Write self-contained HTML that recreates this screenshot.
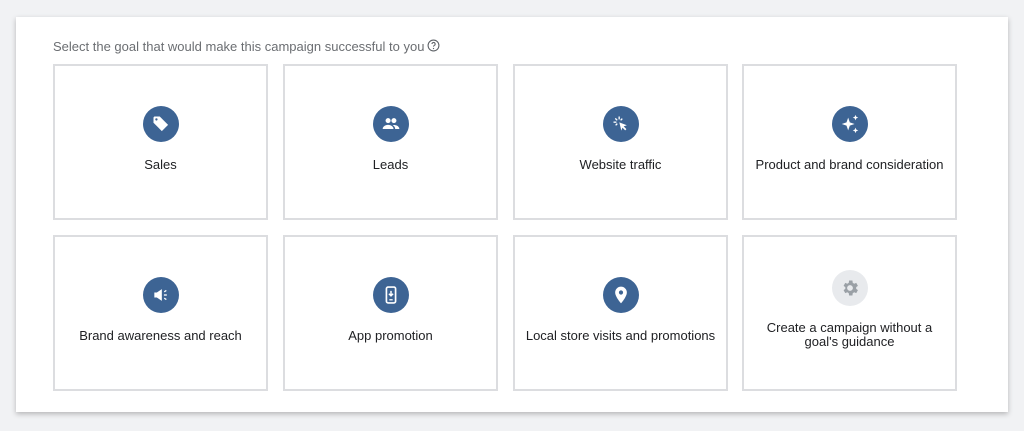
<!DOCTYPE html>
<html><head><meta charset="utf-8"><style>
*{margin:0;padding:0;box-sizing:border-box}
body{width:1024px;height:431px;background:#f1f2f4;font-family:"Liberation Sans",Arial,sans-serif;position:relative;overflow:hidden}
.card{position:absolute;left:16px;top:17px;width:992px;height:395px;background:#fff;box-shadow:0 2px 5px rgba(0,0,0,.25)}
.title{position:absolute;left:53px;top:39px;font-size:13px;color:#6b6e72;white-space:nowrap}
.title svg{vertical-align:-1px;margin-left:3px}
.tile{position:absolute;width:215px;height:156px;border:2px solid #dcdde0;background:#fff;text-align:center;color:#202124;font-size:13px}
.ic{position:absolute;left:50%;margin-left:-18px;width:36px;height:36px;border-radius:50%;background:#3d6494;display:flex;align-items:center;justify-content:center}
.lbl{position:absolute;left:0;right:0;line-height:14px}
</style></head><body>
<div class="card"></div>
<div class="title">Select the goal that would make this campaign successful to you<svg width="13" height="13" viewBox="0 0 24 24"><circle cx="12" cy="12" r="10" fill="none" stroke="#5f6368" stroke-width="2"/><path d="M9.2 9.3a2.9 2.9 0 1 1 4.2 2.6c-.9.5-1.4 1-1.4 2.1" fill="none" stroke="#5f6368" stroke-width="2"/><circle cx="12" cy="17.5" r="1.2" fill="#5f6368"/></svg></div>

<div class="tile" style="left:53px;top:64px"><div class="ic" style="top:40px"><svg width="20" height="20" viewBox="0 0 24 24"><path d="M3 4v6.5l10 10 7.5-7.5-10-10H4z" fill="#fff"/><circle cx="6.5" cy="6.5" r="1.4" fill="#3d6494"/></svg></div><div class="lbl" style="top:92px">Sales</div></div>
<div class="tile" style="left:283px;top:64px"><div class="ic" style="top:40px"><svg width="20" height="20" viewBox="0 0 24 24" fill="#fff"><circle cx="8.5" cy="8" r="3"/><circle cx="15.5" cy="8" r="3"/><path d="M2 18c0-3 3-5 6.5-5S15 15 15 18z"/><path d="M14 13.3c3.5-.6 8 1 8 4.7h-5c0-2-1-3.5-3-4.7z"/></svg></div><div class="lbl" style="top:92px">Leads</div></div>
<div class="tile" style="left:513px;top:64px"><div class="ic" style="top:40px"><svg width="20" height="20" viewBox="0 0 24 24" fill="#fff"><path d="M10 10l9 3.5-3.8 1.3 3.3 3.3-1.5 1.5-3.3-3.3L12.4 20z"/><rect x="9" y="3" width="1.6" height="3.5"/><rect x="3" y="9" width="3.5" height="1.6"/><path d="M4.6 5.8l1.1-1.1 2.3 2.3-1.1 1.1z"/><path d="M13 5l1.1 1.1-2 2-1.1-1.1z"/><path d="M5 13l1.1 1.1 2-2-1.1-1.1z"/></svg></div><div class="lbl" style="top:92px">Website traffic</div></div>
<div class="tile" style="left:742px;top:64px"><div class="ic" style="top:40px"><svg width="22" height="22" viewBox="0 0 24 24" fill="#fff"><path d="M10 5l1.8 5.2L17 12l-5.2 1.8L10 19l-1.8-5.2L3 12l5.2-1.8z"/><path d="M18 2l.9 2.1L21 5l-2.1.9L18 8l-.9-2.1L15 5l2.1-.9z"/><path d="M18 16l.9 2.1L21 19l-2.1.9L18 22l-.9-2.1L15 19l2.1-.9z"/></svg></div><div class="lbl" style="top:92px">Product and brand consideration</div></div>

<div class="tile" style="left:53px;top:235px"><div class="ic" style="top:40px"><svg width="20" height="20" viewBox="0 0 24 24" fill="#fff"><path d="M4 9h3l6-4v14l-6-4H4z"/><rect x="15.5" y="11.2" width="3.5" height="1.6"/><path d="M15.5 7.5l2.5-1.6.8 1.3-2.5 1.6z"/><path d="M15.5 16.5l2.5 1.6.8-1.3-2.5-1.6z"/></svg></div><div class="lbl" style="top:92px">Brand awareness and reach</div></div>
<div class="tile" style="left:283px;top:235px"><div class="ic" style="top:40px"><svg width="20" height="20" viewBox="0 0 24 24"><rect x="6.5" y="2.5" width="11" height="19" rx="2" fill="none" stroke="#fff" stroke-width="2"/><path d="M12 7v6M9.5 10.5L12 13l2.5-2.5" fill="none" stroke="#fff" stroke-width="1.8"/><rect x="10" y="17" width="4" height="1.5" fill="#fff"/></svg></div><div class="lbl" style="top:92px">App promotion</div></div>
<div class="tile" style="left:513px;top:235px"><div class="ic" style="top:40px"><svg width="20" height="20" viewBox="0 0 24 24"><path d="M12 2a7 7 0 0 0-7 7c0 5.2 7 13 7 13s7-7.8 7-13a7 7 0 0 0-7-7z" fill="#fff"/><circle cx="12" cy="9" r="2.5" fill="#3d6494"/></svg></div><div class="lbl" style="top:92px">Local store visits and promotions</div></div>
<div class="tile" style="left:742px;top:235px"><div class="ic" style="top:33px;background:#e8eaed"><svg width="20" height="20" viewBox="0 0 24 24"><path fill="#9aa0a6" d="M19.4 13a7.8 7.8 0 0 0 0-2l2.1-1.6-2-3.5-2.5 1a7 7 0 0 0-1.7-1L14.9 3h-4l-.4 2.9a7 7 0 0 0-1.7 1l-2.5-1-2 3.5L6.4 11a7.8 7.8 0 0 0 0 2l-2.1 1.6 2 3.5 2.5-1a7 7 0 0 0 1.7 1l.4 2.9h4l.4-2.9a7 7 0 0 0 1.7-1l2.5 1 2-3.5zM12 15.5a3.5 3.5 0 1 1 0-7 3.5 3.5 0 0 1 0 7z"/></svg></div><div class="lbl" style="top:84px">Create a campaign without a<br>goal's guidance</div></div>
</body></html>
